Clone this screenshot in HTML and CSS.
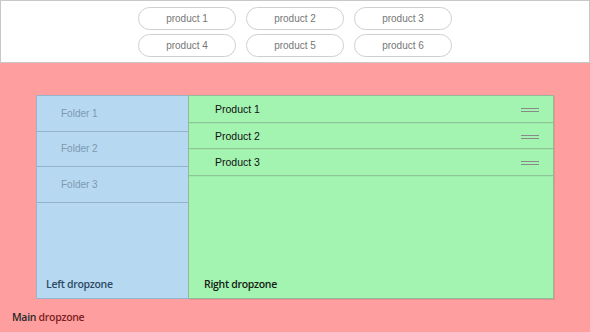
FILE: index.html
```html
<!DOCTYPE html>
<html lang="en">
<head>
  <meta charset="UTF-8">
  <meta name="viewport" content="width=device-width, initial-scale=1">
  <title>Dropzones</title>
  <link rel="stylesheet" href="styles.css">
</head>
<body>
  <!-- Product palette -->
  <header class="palette">
    <div class="chips">
      <div class="chip">product 1</div>
      <div class="chip">product 2</div>
      <div class="chip">product 3</div>
      <div class="chip">product 4</div>
      <div class="chip">product 5</div>
      <div class="chip">product 6</div>
    </div>
  </header>

  <!-- Main dropzone -->
  <main class="main-zone">
    <div class="board">
      <section class="left-zone">
        <ul class="folders">
          <li>Folder 1</li>
          <li>Folder 2</li>
          <li>Folder 3</li>
        </ul>
        <div class="zone-label">Left dropzone</div>
      </section>
      <section class="right-zone">
        <ul class="products">
          <li><span>Product 1</span><i class="handle"></i></li>
          <li><span>Product 2</span><i class="handle"></i></li>
          <li><span>Product 3</span><i class="handle"></i></li>
        </ul>
        <div class="zone-label">Right dropzone</div>
      </section>
    </div>
    <div class="main-label">Main <span>dropzone</span></div>
  </main>
</body>
</html>
```

FILE: styles.css
```css
* {
  margin: 0;
  padding: 0;
  box-sizing: border-box;
}
body {
  font-family: 'Liberation Sans', Arial, sans-serif;
  height: 332px;
  display: flex;
  flex-direction: column;
  background: #ff9e9e;
}
ul {
  list-style: none;
}
/* Palette di atas */
.palette {
  background: #fff;
  border: 1px solid #c8c8c8;
  height: 63px;
  padding-top: 6px;
}
.chips {
  display: grid;
  grid-template-columns: repeat(3, 98px);
  column-gap: 10px;
  row-gap: 4px;
  justify-content: center;
}
.chip {
  height: 23px;
  border: 1px solid #cfcfcf;
  border-radius: 12px;
  display: flex;
  align-items: center;
  justify-content: center;
  font-size: 10px;
  color: #777;
}
/* Area utama */
.main-zone {
  flex: 1;
  padding: 32px 0 0 36px;
}
.board {
  display: flex;
  width: 518px;
  height: 204px;
}
.zone-label {
  margin-top: auto;
  font-family: 'Open Sans', sans-serif;
  font-weight: 600;
  font-size: 10.5px;
  letter-spacing: -0.3px;
  padding: 0 0 7px 9px;
}
.left-zone {
  width: 152px;
  background: #b6d8f1;
  border: 1px solid #96b4cc;
  border-right: none;
  display: flex;
  flex-direction: column;
}
.left-zone .zone-label {
  color: #2c4a64;
}
.folders li {
  height: 35.5px;
  border-bottom: 1px solid #93b2ca;
  display: flex;
  align-items: center;
  padding-left: 24px;
  font-size: 10px;
  color: #7d98af;
}
.right-zone {
  flex: 1;
  background: #a4f4b1;
  border: 1px solid #93b89a;
  box-shadow: 1px 1px 0 rgba(0, 0, 0, 0.08);
  display: flex;
  flex-direction: column;
}
.right-zone .zone-label {
  color: #152015;
  padding-left: 15px;
}
.products li {
  height: 26.7px;
  border-bottom: 1px solid #8dc498;
  box-shadow: 0 1px 0 rgba(0, 0, 0, 0.04);
  display: flex;
  align-items: center;
  justify-content: space-between;
  padding: 0 14px 0 26px;
  font-size: 10.5px;
  color: #111;
}
.handle {
  width: 18px;
  height: 4px;
  margin-top: 2px;
  border-top: 1px solid #8a8a8a;
  border-bottom: 1px solid #8a8a8a;
}
.main-label {
  margin: 11px 0 0 -24px;
  font-family: 'Open Sans', sans-serif;
  font-weight: 600;
  font-size: 10.5px;
  letter-spacing: -0.3px;
  color: #2a2a2a;
}
.main-label span {
  color: #7c1f1f;
}
```
